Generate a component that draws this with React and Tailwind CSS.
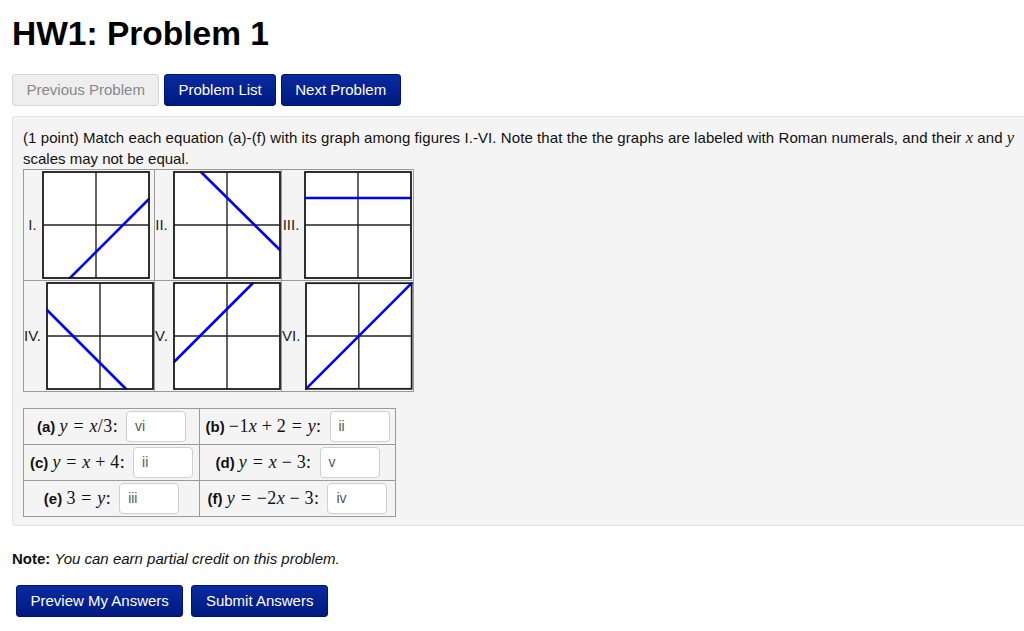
import React from "react";

const SANS = "font-['Liberation_Sans',Arial,sans-serif]";

function Graph({ line }) {
  return (
    <svg width="108" height="108" viewBox="0 0 108 108" className="block bg-white">
      <line x1="54" y1="1" x2="54" y2="107" stroke="#222" strokeWidth="1.4" />
      <line x1="1" y1="54" x2="107" y2="54" stroke="#222" strokeWidth="1.4" />
      <line x1={line[0]} y1={line[1]} x2={line[2]} y2={line[3]} stroke="#0000ff" strokeWidth="2.6" strokeLinecap="round" />
      <rect x="1" y="1" width="106" height="106" fill="none" stroke="#1a1a1a" strokeWidth="1.8" />
    </svg>
  );
}

function GCell({ label, line, last }) {
  return (
    <div className={"flex items-center justify-center gap-[5px] h-[111px] border-b border-[#9a9a9a] " + (last ? "" : "border-r")}>
      <span className="text-[15px] text-[#222]">{label}</span>
      <Graph line={line} />
    </div>
  );
}

const M = ({ children }) => (
  <span className="font-['Liberation_Serif','Times_New_Roman',serif] text-[16.5px]">{children}</span>
);
const AM = ({ children }) => (
  <span className="font-['Liberation_Serif','Times_New_Roman',serif] text-[18px] tracking-[0.4px]">{children}</span>
);
const V = ({ children }) => <i>{children}</i>;
const Eq = () => <span className="px-[5.5px]">=</span>;
const Bin = ({ children }) => <span className="px-[4.5px]">{children}</span>;

function Ans({ letter, math, value, last }) {
  return (
    <div className={"flex items-center justify-center h-[36px] border-b border-[#9a9a9a] " + (last ? "" : "border-r")}>
      <span className="whitespace-nowrap">
        <b className="text-[15px]">({letter})</b> <AM>{math}</AM>
      </span>
      <div className="ml-[8px] w-[60px] h-[31px] bg-white border border-[#cfcfcf] rounded-[4px] flex items-center pl-[8px] text-[14px] text-[#555]">
        {value}
      </div>
    </div>
  );
}

function BlueBtn({ children, className = "" }) {
  return (
    <div className={"h-[32px] flex items-center px-[13.5px] rounded-[3px] border border-[#001470] bg-linear-to-b from-[#0a2aa0] to-[#001a80] text-white text-[15px] " + className}>
      {children}
    </div>
  );
}

export default function App() {
  return (
    <div className={SANS + " bg-white text-[#111] min-h-[631px] overflow-hidden"}>
      <div className="pl-[12px] pt-[14px]">
        <h1 className="text-[33.5px] leading-[40px] font-bold text-black">HW1: Problem 1</h1>
        <div className="mt-[20px] flex gap-[4.5px]">
          <div className="h-[32px] flex items-center px-[13.5px] rounded-[3px] border border-[#d6d6d6] bg-[#eeeeee] text-[#888] text-[15px]">
            Previous Problem
          </div>
          <BlueBtn>Problem List</BlueBtn>
          <BlueBtn>Next Problem</BlueBtn>
        </div>
      </div>

      <div className="ml-[12px] mt-[10px] border border-r-0 border-[#e2e2e2] rounded-l-[3px] bg-[#f4f4f4] pl-[10px] pt-[10px] pb-[8px] text-[15px] leading-[21px]">
        <div className="whitespace-nowrap tracking-[0.08px]">
          (1 point) Match each equation (a)-(f) with its graph among figures I.-VI. Note that the the graphs are labeled with Roman numerals, and their <M><V>x</V></M> and <M><V>y</V></M>
        </div>
        <div>scales may not be equal.</div>

        <div className="w-[391px] grid grid-cols-[131px_127px_132px] border-l border-t border-[#9a9a9a] leading-normal">
          <GCell label="I." line={[27, 108, 107, 28]} />
          <GCell label="II." line={[28, 1, 107, 79]} />
          <GCell label="III." line={[1, 27, 107, 27]} />
          <GCell label="IV." line={[1, 28, 80, 107]} />
          <GCell label="V." line={[1, 80, 80, 1]} />
          <GCell label="VI." line={[1, 107, 107, 1]} />
        </div>

        <div className="mt-[16px] w-[373px] grid grid-cols-[176px_196px] border-l border-t border-[#9a9a9a] leading-normal">
          <Ans letter="a" value="vi" math={<><V>y</V><Eq /><V>x</V>/3:</>} />
          <Ans letter="b" value="ii" math={<>−1<V>x</V><Bin>+</Bin>2<Eq /><V>y</V>:</>} />
          <Ans letter="c" value="ii" math={<><V>y</V><Eq /><V>x</V><Bin>+</Bin>4:</>} />
          <Ans letter="d" value="v" math={<><V>y</V><Eq /><V>x</V><Bin>−</Bin>3:</>} />
          <Ans letter="e" value="iii" math={<>3<Eq /><V>y</V>:</>} />
          <Ans letter="f" value="iv" math={<><V>y</V><Eq />−2<V>x</V><Bin>−</Bin>3:</>} />
        </div>
      </div>

      <div className="ml-[12px] mt-[22px] text-[15px] leading-[21px]">
        <b>Note:</b> <i>You can earn partial credit on this problem.</i>
      </div>
      <div className="ml-[16px] mt-[16px] flex gap-[8px]">
        <BlueBtn>Preview My Answers</BlueBtn>
        <BlueBtn>Submit Answers</BlueBtn>
      </div>
    </div>
  );
}
